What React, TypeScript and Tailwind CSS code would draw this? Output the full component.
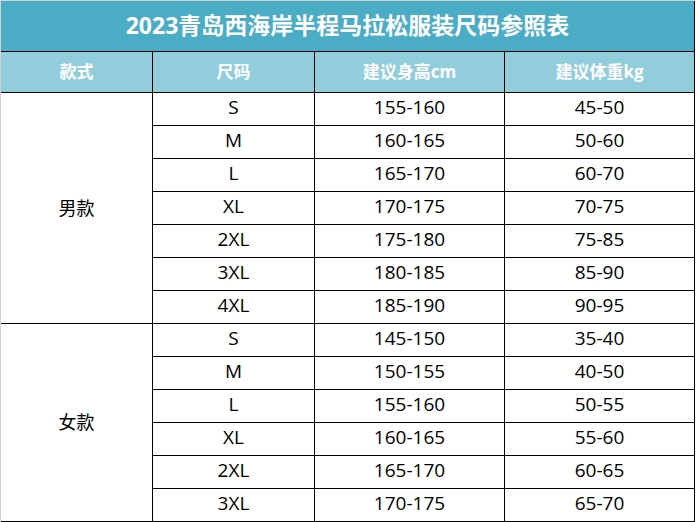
import React from "react";

const men = [
  ["S", "155-160", "45-50"],
  ["M", "160-165", "50-60"],
  ["L", "165-170", "60-70"],
  ["XL", "170-175", "70-75"],
  ["2XL", "175-180", "75-85"],
  ["3XL", "180-185", "85-90"],
  ["4XL", "185-190", "90-95"],
];
const women = [
  ["S", "145-150", "35-40"],
  ["M", "150-155", "40-50"],
  ["L", "155-160", "50-55"],
  ["XL", "160-165", "55-60"],
  ["2XL", "165-170", "60-65"],
  ["3XL", "170-175", "65-70"],
];

const font = { fontFamily: '"Open Sans", "Noto Sans CJK SC", sans-serif' };

function Cell({ children }: { children: React.ReactNode }) {
  return (
    <div className="bg-white flex items-center justify-center text-[19px] text-black leading-none pb-[3px]">
      {children}
    </div>
  );
}

export default function App() {
  return (
    <div className="w-[696px] h-[522px] bg-white" style={font}>
      <div className="w-[695px] h-[522px] border-l border-t border-[#d2d2d2]">
        <div className="w-[694px] grid grid-cols-[151px_161px_189px_189px] grid-rows-[50px_40px_repeat(13,32px)] gap-px bg-black border-r border-b border-black">
          <div className="col-span-4 bg-[#4bacc6] flex items-center justify-center text-white font-bold text-[23px] leading-none pb-[2px]">
            2023青岛西海岸半程马拉松服装尺码参照表
          </div>
          {["款式", "尺码", "建议身高cm", "建议体重kg"].map((h) => (
            <div key={h} className="bg-[#92cddc] flex items-center justify-center text-white font-bold text-[17px] leading-none pb-px">
              {h}
            </div>
          ))}
          <div className="row-span-7 bg-white flex items-center justify-center text-[18px] text-black leading-none pb-px">男款</div>
          {men.map((r, i) => (
            <React.Fragment key={"m" + i}>
              <Cell>{r[0]}</Cell>
              <Cell>{r[1]}</Cell>
              <Cell>{r[2]}</Cell>
            </React.Fragment>
          ))}
          <div className="row-span-6 bg-white flex items-center justify-center text-[18px] text-black leading-none pb-px">女款</div>
          {women.map((r, i) => (
            <React.Fragment key={"w" + i}>
              <Cell>{r[0]}</Cell>
              <Cell>{r[1]}</Cell>
              <Cell>{r[2]}</Cell>
            </React.Fragment>
          ))}
        </div>
      </div>
    </div>
  );
}
